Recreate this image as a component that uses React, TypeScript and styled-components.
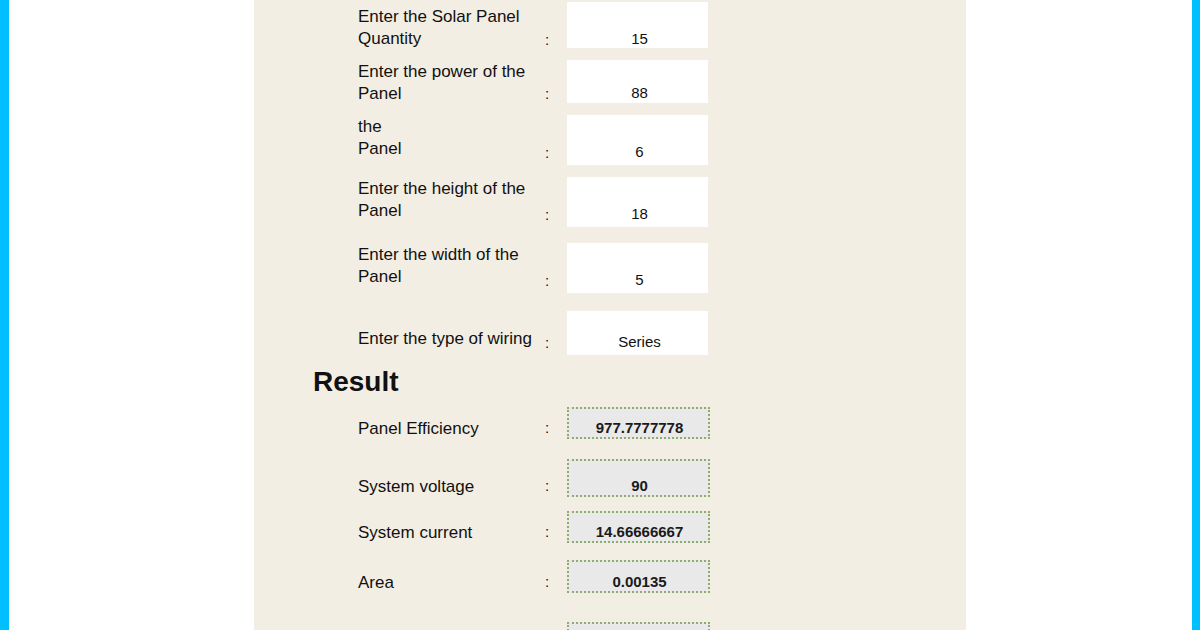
import React from 'react';
import styled, { createGlobalStyle } from 'styled-components';

type Field = {
  lines: string[];
  value: string;
  height: number;
  gap: number;
  lift: number;
  align?: 'start' | 'end';
  shift?: number;
};

type Output = {
  label: string;
  value: string;
  height: number;
  gap: number;
};

const GlobalStyle = createGlobalStyle`
  html, body {
    margin: 0;
    padding: 0;
    background: #ffffff;
    overflow: hidden;
  }
`;

const StyledPage = styled.div`
  display: grid;
  grid-template-columns: 9px 245px 712px 226px 8px;
  height: 630px;
  font-family: 'Liberation Sans', Arial, sans-serif;
  color: #111111;
`;

const StyledEdge = styled.div`
  background: #00bfff;
`;

const StyledGutter = styled.div`
  background: #ffffff;
`;

const StyledPanel = styled.main`
  background: #f3eee3;
  padding: 2px 0 0 59px;
  overflow: hidden;
`;

// row height follows the box, the two-line labels may run past it
const StyledRow = styled.div<{ $gap: number; $h: number }>`
  display: grid;
  grid-template-columns: 187px 22px auto;
  grid-template-rows: ${(p) => p.$h}px;
  margin: ${(p) => p.$gap}px 0 0 45px;
`;

const StyledLabel = styled.div<{ $align: 'start' | 'end'; $shift: number }>`
  align-self: ${(p) => p.$align};
  font-size: 17px;
  line-height: 22px;
  ${(p) =>
    p.$align === 'start'
      ? `padding-top: ${p.$shift + 1}px;`
      : `margin-bottom: ${p.$shift - 1}px;`}
  white-space: nowrap;
`;

const StyledColon = styled.div<{ $lift: number }>`
  align-self: end;
  font-size: 15px;
  line-height: 22px;
  margin-bottom: ${(p) => p.$lift}px;
`;

const StyledInput = styled.div<{ $h: number }>`
  display: flex;
  align-items: flex-end;
  justify-content: center;
  box-sizing: border-box;
  width: 141px;
  height: ${(p) => p.$h}px;
  padding-left: 4px;
  background: #ffffff;
  font-size: 15px;
  line-height: 22px;
`;

const StyledOutput = styled(StyledInput)`
  width: 143px;
  padding-left: 2px;
  background: #e9e9e9;
  border: 2px dotted #8fac6c;
  font-weight: 700;
  color: #1a1a1a;
`;

const StyledValue = styled.span<{ $lift: number }>`
  margin-bottom: ${(p) => p.$lift}px;
`;

const StyledHeading = styled.h2`
  margin: 11px 0 0;
  font-size: 28px;
  line-height: 32px;
  font-weight: 700;
`;

const fields: Field[] = [
  { lines: ['Enter the Solar Panel', 'Quantity'], value: '15', height: 46, gap: 0, lift: -2, shift: 3 },
  { lines: ['Enter the power of the', 'Panel'], value: '88', height: 43, gap: 12, lift: -1 },
  { lines: ['the', 'Panel'], value: '6', height: 50, gap: 12, lift: 2 },
  { lines: ['Enter the height of the', 'Panel'], value: '18', height: 50, gap: 12, lift: 2 },
  { lines: ['Enter the width of the', 'Panel'], value: '5', height: 50, gap: 16, lift: 2 },
  { lines: ['Enter the type of wiring'], value: 'Series', height: 44, gap: 18, lift: 2, align: 'end', shift: 6 },
];

const outputs: Output[] = [
  { label: 'Panel Efficiency', value: '977.7777778', height: 32, gap: 9 },
  { label: 'System voltage', value: '90', height: 38, gap: 20 },
  { label: 'System current', value: '14.66666667', height: 32, gap: 14 },
  { label: 'Area', value: '0.00135', height: 33, gap: 17 },
  { label: '', value: '', height: 33, gap: 29 },
];

const App = () => {
  return (
    <>
      <GlobalStyle />
      <StyledPage>
        <StyledEdge />
        <StyledGutter />
        <StyledPanel>
          {fields.map((f) => (
            <StyledRow key={f.lines.join(' ')} $gap={f.gap} $h={f.height}>
              <StyledLabel $align={f.align ?? 'start'} $shift={f.shift ?? 0}>
                {f.lines.map((l) => (
                  <div key={l}>{l}</div>
                ))}
              </StyledLabel>
              <StyledColon $lift={f.lift - 1}>:</StyledColon>
              <StyledInput $h={f.height}>
                <StyledValue $lift={f.lift}>{f.value}</StyledValue>
              </StyledInput>
            </StyledRow>
          ))}

          <StyledHeading>Result</StyledHeading>

          {outputs.map((o, i) => (
            <StyledRow key={i} $gap={o.gap} $h={o.height}>
              <StyledLabel $align="end" $shift={0}>
                {o.label}
              </StyledLabel>
              <StyledColon $lift={0}>{o.label ? ':' : ''}</StyledColon>
              <StyledOutput $h={o.height}>
                <StyledValue $lift={-2}>{o.value}</StyledValue>
              </StyledOutput>
            </StyledRow>
          ))}
        </StyledPanel>
        <StyledGutter />
        <StyledEdge />
      </StyledPage>
    </>
  );
};

export default App;
